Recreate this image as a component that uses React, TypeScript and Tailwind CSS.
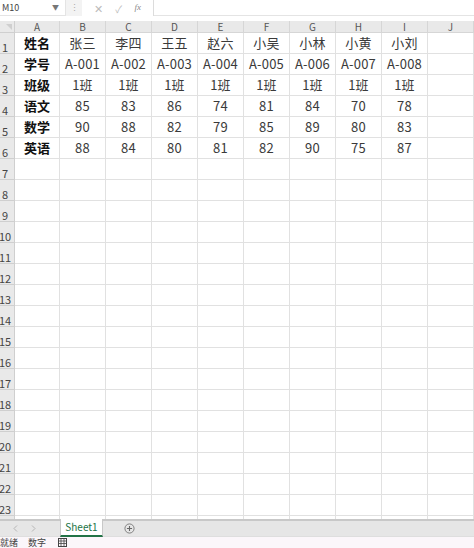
import React from "react";

const cols = ["A", "B", "C", "D", "E", "F", "G", "H", "I", "J"];

// sheet content, rows 1..6
const data: string[][] = [
  ["姓名", "张三", "李四", "王五", "赵六", "小吴", "小林", "小黄", "小刘"],
  ["学号", "A-001", "A-002", "A-003", "A-004", "A-005", "A-006", "A-007", "A-008"],
  ["班级", "1班", "1班", "1班", "1班", "1班", "1班", "1班", "1班"],
  ["语文", "85", "83", "86", "74", "81", "84", "70", "78"],
  ["数学", "90", "88", "82", "79", "85", "89", "80", "83"],
  ["英语", "88", "84", "80", "81", "82", "90", "75", "87"],
];

const font = { fontFamily: '"Noto Sans CJK SC", "Liberation Sans", sans-serif' };

const gridCols = "grid grid-cols-[15px_45px_repeat(8,46px)_1fr]";

const FormulaBar: React.FC = () => (
  <div className="flex h-[21px] bg-white">
    <div className="flex h-[16px] w-[66px] items-center justify-between border-b border-r border-[#e4e4e4] pl-[2px] pr-[6px]">
      <span className="text-[9px] text-[#444]">M10</span>
      <span className="text-[7px] text-[#777]">▼</span>
    </div>
    <div className="flex h-[16px] w-[16px] items-center justify-center bg-[#f3f3f3] text-[9px] text-[#aaa]">⋮</div>
    <div className="flex h-[16px] w-[72px] items-center justify-around border-r border-[#dcdcdc] px-[6px] text-[#bbb]">
      <span className="text-[11px]">✕</span>
      <span className="text-[10px]">✓</span>
      <span className="text-[9px] italic text-[#888]" style={{ fontFamily: '"Liberation Serif", serif' }}>
        fx
      </span>
    </div>
    <div className="h-[16px] flex-1 border-b border-[#e4e4e4]" />
  </div>
);

const ColumnHeader: React.FC = () => (
  <div className={`${gridCols} h-[12px] bg-[#e9e9e9] text-[10px] leading-none text-[#555]`}>
    <div className="relative border-b border-r border-[#cfcfcf]">
      <div className="absolute bottom-[2px] right-[2px] h-0 w-0 border-l-[6px] border-t-[6px] border-l-transparent border-t-[#cfcfcf]" />
    </div>
    {cols.map((c) => (
      <div key={c} className="flex items-center justify-center border-b border-r border-[#d6d6d6]">
        {c}
      </div>
    ))}
  </div>
);

const Sheet: React.FC = () => {
  // 23 labelled rows, the 24th only peeks in under the tab bar
  const rows = Array.from({ length: 24 }, (_, i) => i + 1);
  return (
    <div className="h-[486px] overflow-hidden">
      {rows.map((r) => {
        const values = data[r - 1] || [];
        return (
          <div key={r} className={`${gridCols} h-[21px]`}>
            <div className="flex items-end justify-center border-b border-r border-[#cfcfcf] bg-[#e9e9e9] pr-[4px] text-[11px] leading-none text-[#444]">
              {r <= 23 ? r : ""}
            </div>
            {cols.map((c, ci) => (
              <div
                key={c}
                className={`flex items-center justify-center overflow-hidden whitespace-nowrap border-b border-r border-[#e1e1e1] text-[13px] ${
                  ci === 0 ? "font-bold text-[#111]" : "tracking-[0.2px] text-[#3a3a3a]"
                }`}
              >
                {values[ci] ?? ""}
              </div>
            ))}
          </div>
        );
      })}
    </div>
  );
};

const Chevron: React.FC<{ dir: "left" | "right" }> = ({ dir }) => (
  <svg width="5" height="7" viewBox="0 0 5 7">
    <path
      d={dir === "left" ? "M4 0.5L1 3.5L4 6.5" : "M1 0.5L4 3.5L1 6.5"}
      fill="none"
      stroke="#b5b5b5"
      strokeWidth="1"
    />
  </svg>
);

const TabBar: React.FC = () => (
  <div className="flex h-[17px] border-t-2 border-[#c8c8c8] bg-[#e6e6e6]">
    <div className="flex w-[60px] items-center gap-[13px] pl-[13px]">
      <Chevron dir="left" />
      <Chevron dir="right" />
    </div>
    <div className="-mt-[2px] flex h-[18px] w-[43px] items-center justify-center border-x border-[#c8c8c8] border-b-2 border-b-[#217346] bg-white text-[10px] leading-none text-[#217346]">
      Sheet1
    </div>
    <div className="flex w-[52px] items-center justify-center">
      <svg width="11" height="11" viewBox="0 0 12 12">
        <circle cx="6" cy="6" r="5" fill="none" stroke="#777" strokeWidth="1" />
        <path d="M6 3.2v5.6M3.2 6h5.6" stroke="#666" strokeWidth="1.2" />
      </svg>
    </div>
  </div>
);

const StatusBar: React.FC = () => (
  <div className="flex h-[12px] items-center border-t border-[#dedede] bg-[#fbf6fa] text-[9px] leading-none text-[#444]">
    <span>就绪</span>
    <span className="ml-[10px]">数字</span>
    <svg className="ml-[12px]" width="9" height="9" viewBox="0 0 9 9">
      <rect x="0.5" y="0.5" width="8" height="8" fill="none" stroke="#444" />
      <path d="M0.5 3h8M0.5 5.5h8M3 0.5v8M6 0.5v8" stroke="#444" strokeWidth="0.8" />
    </svg>
  </div>
);

export default function App() {
  return (
    <div className="h-[548px] w-[474px] overflow-hidden bg-white" style={font}>
      <FormulaBar />
      <ColumnHeader />
      <Sheet />
      <TabBar />
      <StatusBar />
    </div>
  );
}
